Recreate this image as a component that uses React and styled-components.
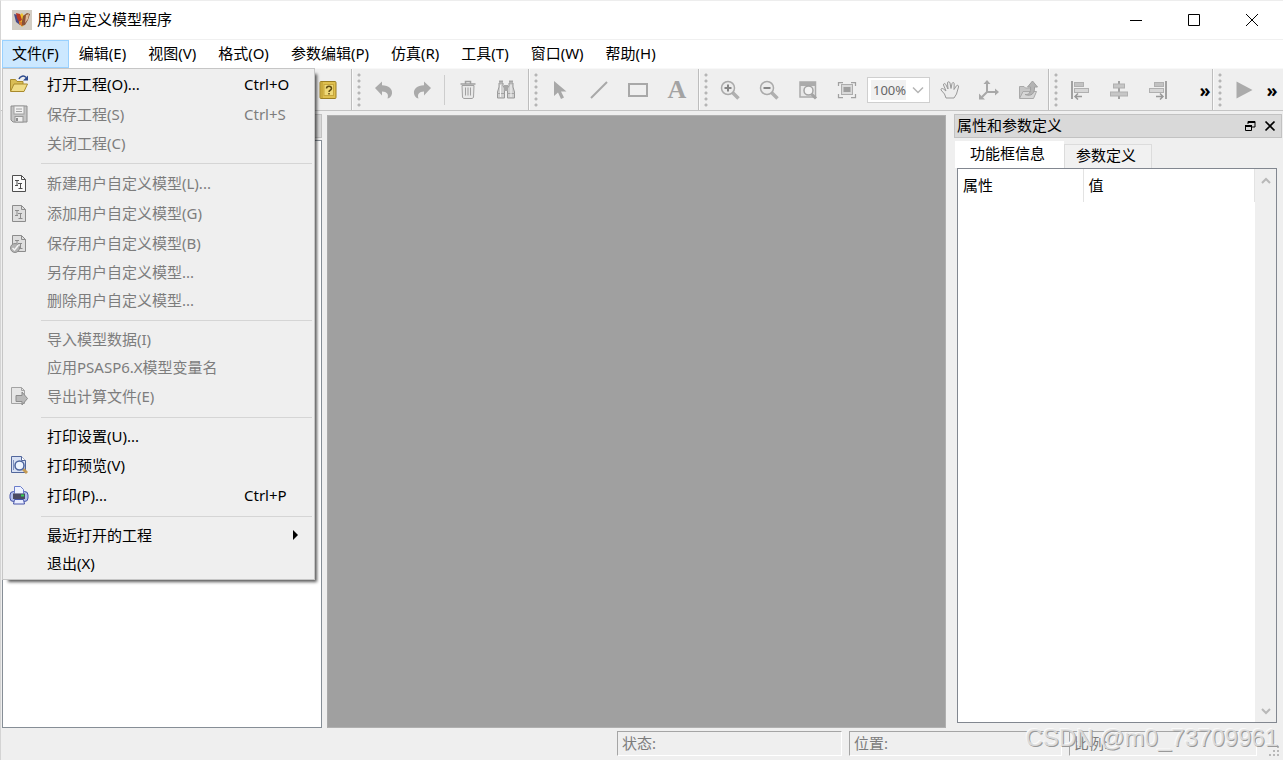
import React from "react";
import styled, { createGlobalStyle } from "styled-components";

const GlobalStyle = createGlobalStyle`
  * {
    box-sizing: border-box;
  }
  body {
    margin: 0;
    background: #efefef;
    font-family: "Noto Sans", "Noto Sans CJK SC", sans-serif;
    font-size: 15px;
    line-height: 20px;
    color: #000;
  }
  button, input, select {
    font: inherit;
    color: inherit;
  }
  button {
    padding: 0;
    border: 0;
    background: transparent;
  }
`;

/* ---------- icons ---------- */

const Svg = ({ size = 20, children }) => (
  <svg width={size} height={size} viewBox="0 0 20 20" fill="none" aria-hidden="true">
    {children}
  </svg>
);

const AppIcon = () => (
  <Svg>
    <rect width="20" height="20" fill="#d2cdc4" />
    <path d="M2 4l4 1 4 8-2 2-4-3z" fill="#4a4a86" />
    <path d="M8 5l2-2 2 3 1 8-3 3-3-4z" fill="#edc02a" />
    <path d="M4 3l4 1 2 6-3 2-2-4z" fill="#b83a28" />
    <path d="M11 6l4-3 3 1-2 6-3 5-4 1z" fill="#8a5236" />
    <path d="M14 5l3-1-1 5-3 4z" fill="#ddb898" />
    <path d="M7 11l3 1v4l-3-2z" fill="#d8742a" />
  </Svg>
);

const OpenIcon = () => (
  <Svg>
    <path d="M1.500 17V5.500h5l1.500 2h6V10" fill="#d9bd55" stroke="#a98a2c" />
    <path d="M1.500 17.500L5 10h13.500l-3.500 7.500z" fill="#f0dc86" stroke="#a98a2c" />
    <path d="M10 5c1-3 5-4 7-1.500" stroke="#2d4a8e" strokeWidth="1.500" />
    <path d="M19 1.500v5h-5z" fill="#2d4a8e" />
  </Svg>
);

const SaveIcon = () => (
  <Svg>
    <path d="M2 2h16v16H4l-2-2z" fill="#c5c5c5" stroke="#8e8e8e" />
    <rect x="5" y="2" width="10" height="8" fill="#f1f1f1" stroke="#a0a0a0" />
    <path d="M7 5h6M7 7.500h6" stroke="#a0a0a0" />
    <rect x="6" y="12.500" width="8" height="5.500" fill="#eee" stroke="#999" />
    <path d="M8 14v3" stroke="#8e8e8e" strokeWidth="2" />
  </Svg>
);

const ModelIcon = ({ color = "#4e4e4e", fill = "#fafafa", check }) => (
  <Svg>
    <path d="M3.500 2.500h9l4 4v12h-13z" fill={fill} stroke={color} />
    <path d="M12.500 2.500v4h4" stroke={color} />
    <path d="M6 7.500h4M8 7.500v5M6 12.500h3M9 10.500h4M11.500 10.500v5M9.500 15.500h4" stroke={color} />
    {check && (
      <>
        <circle cx="6" cy="15" r="4.500" fill="#b3b3b3" stroke="#8e8e8e" />
        <path d="M3.500 15l2 2 4-5" stroke="#f4f4f4" strokeWidth="1.500" />
      </>
    )}
  </Svg>
);

const ExportIcon = () => (
  <Svg>
    <path d="M2.500 1.500h10l3 3v13h-13z" fill="#e6e6e6" stroke="#a3a3a3" />
    <path d="M12.500 1.500v3h3" stroke="#a3a3a3" />
    <path d="M7 9.500h6V6l5.500 6.500-5.500 6.500v-3.500H7z" fill="#b9b9b9" stroke="#8c8c8c" />
  </Svg>
);

const PreviewIcon = () => (
  <Svg>
    <path d="M2.500 1.500h10l4 4v12h-14z" fill="#d7e0f3" stroke="#52679c" />
    <path d="M12.500 1.500v4h4" fill="#fff" stroke="#52679c" />
    <path d="M4.500 5v10" stroke="#7f92c0" />
    <path d="M14 14l4 4" stroke="#c49a53" strokeWidth="3" />
    <circle cx="10.500" cy="10.500" r="4.500" fill="#edf4ff" stroke="#4a629c" strokeWidth="1.500" />
  </Svg>
);

const PrintIcon = () => (
  <Svg>
    <rect x="1" y="6.500" width="18" height="10" rx="3.500" fill="#b3bfec" stroke="#4553a8" />
    <path d="M5.500 8.500v-7h6l3 3v4" fill="#eef2ff" stroke="#6a7ccb" />
    <rect x="4" y="8.500" width="12" height="5.500" fill="#4a4a63" />
    <path d="M12 10.500h3" stroke="#35d253" strokeWidth="2" />
    <path d="M5.500 14.500h9l1 4.500h-11z" fill="#e9edff" stroke="#4553a8" />
  </Svg>
);

const HelpIcon = () => (
  <Svg>
    <rect x="1" y="1.500" width="16" height="17" rx="1" fill="#dfc04f" stroke="#9c7f23" />
    <path d="M3 2v16" stroke="#b5952f" />
    <rect x="5" y="4.500" width="9.500" height="11" fill="#efd978" stroke="#c7a63c" />
    <path d="M7.500 8.500c0-3 5-3 5 0 0 2-2.500 1.500-2.500 3.500" stroke="#5f4a12" strokeWidth="1.500" />
    <path d="M9.250 13h1.500v1.500h-1.500z" fill="#5f4a12" />
  </Svg>
);

const UndoIcon = () => (
  <Svg>
    <path d="M1 8l7-6.500v3.800c7 0 10.500 3.700 10 8.200-.3 2.700-2 4.500-4.500 5 1.500-4-.5-7-5.500-7v4z" fill="#aaa" />
  </Svg>
);

const RedoIcon = () => (
  <Svg>
    <path d="M19 8l-7-6.500v3.800c-7 0-10.500 3.700-10 8.200.3 2.700 2 4.500 4.500 5-1.500-4 .5-7 5.500-7v4z" fill="#aaa" />
  </Svg>
);

const TrashIcon = () => (
  <Svg>
    <path d="M4 5.500h12l-.5 12-1.500 1H6l-1.500-1z" fill="#e8e8e8" stroke="#a0a0a0" />
    <path d="M2.500 4h15M7.500 3.500v-2h5v2" stroke="#a0a0a0" strokeWidth="1.500" />
    <path d="M7.500 7.500v8M10 7.500v8M12.500 7.500v8" stroke="#a0a0a0" />
  </Svg>
);

const FindIcon = () => (
  <Svg>
    <path d="M3 3h4v3l1.500 2v10h-7v-6L3 7zM17 3h-4v3l-1.500 2v10h7v-6L17 7z" fill="#d0d0d0" stroke="#999" />
    <path d="M3 1.500h4M13 1.500h4" stroke="#a5a5a5" strokeWidth="2" />
    <rect x="8" y="5" width="4" height="6" fill="#a8a8a8" />
    <path d="M1.500 13.500h7M11.500 13.500h7" stroke="#a5a5a5" />
    <path d="M4.500 5v12M15 5v12" stroke="#f4f4f4" />
  </Svg>
);

const PointerIcon = () => (
  <Svg>
    <path d="M4 1v15l4-3.500 3 6.500 3-1.500-3-6h5.500z" fill="#a8a8a8" />
  </Svg>
);

const LineIcon = () => (
  <Svg>
    <path d="M2 18L18 2" stroke="#a8a8a8" strokeWidth="2" />
  </Svg>
);

const RectIcon = () => (
  <Svg>
    <rect x="1" y="4" width="18" height="12" fill="#efefef" stroke="#a8a8a8" strokeWidth="2" />
  </Svg>
);

const ZoomIcon = ({ plus }) => (
  <Svg>
    <path d="M12.500 12.500l6 6" stroke="#b0b0b0" strokeWidth="3.500" />
    <circle cx="8" cy="8" r="6.500" fill="#ececec" stroke="#aaa" strokeWidth="1.500" />
    <path d="M4.500 8h7" stroke="#858585" strokeWidth="2" />
    {plus && <path d="M8 4.500v7" stroke="#858585" strokeWidth="2" />}
  </Svg>
);

const ZoomPageIcon = () => (
  <Svg>
    <rect x="2" y="2" width="15.500" height="15" fill="#e7e7e7" stroke="#ababab" strokeWidth="1.500" />
    <path d="M2 4h16" stroke="#ababab" strokeWidth="4" />
    <path d="M13.500 14l4.500 4.500" stroke="#a3a3a3" strokeWidth="3" />
    <circle cx="10.500" cy="10.500" r="4.500" fill="#f3f3f3" stroke="#a3a3a3" strokeWidth="1.500" />
  </Svg>
);

const FitIcon = () => (
  <Svg>
    <path d="M1.500 6V2.500H6M14 2.500h4.500V6M18.500 14v3.500H14M6 17.500H1.500V14" stroke="#a0a0a0" strokeWidth="1.250" />
    <rect x="4.500" y="4.500" width="11" height="10" fill="#d9d9d9" stroke="#adadad" />
    <rect x="6.500" y="7" width="7" height="5" fill="#9e9e9e" />
  </Svg>
);

const HandIcon = () => (
  <Svg>
    <path
      d="M6 18l-1.500-4L1 10c-.5-1.500 1.500-2 2.500-1L6 11 3.500 5c-.3-1.500 1.500-2 2.200-.7L8 9 7.500 3c0-1.700 2.200-1.700 2.500 0l1 5.500 1-5c.5-1.500 2.300-1.200 2.200.3L14 9.500l2.500-3.800c1-1 2.500-.2 2 1.300L16.500 14 14 18z"
      fill="#ededed"
      stroke="#999"
    />
  </Svg>
);

const AxesIcon = () => (
  <Svg>
    <path d="M8 3v9h9M8 12l-5 5" stroke="#a8a8a8" strokeWidth="2" />
    <path d="M8 0l3.500 4h-7zM20 12l-4 3.500v-7zM0 19.500v-6l6 6z" fill="#a8a8a8" />
  </Svg>
);

const FolderUpIcon = () => (
  <Svg>
    <path d="M1.500 18V6.500H6L7.500 8H14v4" fill="#c6c6c6" stroke="#a9a9a9" />
    <path d="M1.500 18.500L5 11.500h13.500l-3 7z" fill="#d6d6d6" stroke="#a9a9a9" />
    <path d="M7 14.500c4 .5 6-2 5.500-7.500H9.500l5-6 5 6h-3c.5 6-3 10-9.500 7.500z" fill="#b4b4b4" stroke="#a0a0a0" />
  </Svg>
);

const AlignLeftIcon = () => (
  <Svg>
    <path d="M2 1v18" stroke="#a1a1a1" strokeWidth="2" />
    <rect x="4.500" y="2.500" width="9" height="4" fill="#c2c2c2" stroke="#b0b0b0" />
    <rect x="4.500" y="8.500" width="14" height="4" fill="#d6d6d6" stroke="#b0b0b0" />
    <path d="M5 16.500h7M8 13.500l-3 3 3 3" stroke="#999" strokeWidth="1.500" />
  </Svg>
);

const AlignCenterIcon = () => (
  <Svg>
    <path d="M10 1v18" stroke="#a1a1a1" strokeWidth="2" />
    <rect x="4.500" y="4" width="11" height="4" fill="#c6c6c6" stroke="#b0b0b0" />
    <rect x="1.500" y="12" width="17" height="4" fill="#c6c6c6" stroke="#b0b0b0" />
  </Svg>
);

const AlignRightIcon = () => (
  <Svg>
    <path d="M18 1v18" stroke="#a1a1a1" strokeWidth="2" />
    <rect x="6.500" y="2.500" width="9" height="4" fill="#c2c2c2" stroke="#b0b0b0" />
    <rect x="1.500" y="8.500" width="14" height="4" fill="#d6d6d6" stroke="#b0b0b0" />
    <path d="M15 16.500H8M12 13.500l3 3-3 3" stroke="#999" strokeWidth="1.500" />
  </Svg>
);

const PlayIcon = () => (
  <Svg>
    <path d="M2.500 1.500L18.500 10l-16 8.500z" fill="#ababab" />
  </Svg>
);

/* ---------- title bar ---------- */

const Window = styled.div`
  display: flex;
  flex-direction: column;
  min-height: 100vh;
  border-top: 1px solid #ededed;
  border-left: 1px solid #d4d4d4;
  overflow: hidden;
`;

const TitleBar = styled.header`
  display: flex;
  align-items: center;
  height: 38px;
  padding: 0 2px 0 11px;
  background: #fff;
  h1 {
    flex: 1;
    margin: 0;
    padding: 0 0 2px 5px;
    font-size: 15px;
    font-weight: 400;
  }
`;

const WindowButton = styled.button`
  width: 58px;
  height: 38px;
  svg {
    display: block;
    margin: auto;
  }
`;

/* ---------- menu ---------- */

const MenuBar = styled.nav`
  display: flex;
  height: 29px;
  padding-left: 1px;
  border-top: 1px solid #f0f0f0;
  background: #fff;
`;

const MenuHolder = styled.div`
  position: relative;
`;

const MenuButton = styled.button`
  height: 28px;
  padding: 0 ${(p) => (p.$open ? 9 : 11)}px 2px 9px;
  border: 1px solid ${(p) => (p.$open ? "#99d1ff" : "transparent")};
  background: ${(p) => (p.$open ? "#cce8ff" : "transparent")};
  white-space: nowrap;
`;

const MenuPopup = styled.div`
  position: absolute;
  z-index: 2;
  top: 100%;
  left: 0;
  width: 313px;
  padding: 1px 2px 1px 1px;
  border: 1px solid #c6c6c6;
  background: #efefef;
  box-shadow: 4px 4px 3px -2px rgba(0, 0, 0, 0.65);
`;

const MenuItem = styled.button`
  display: grid;
  grid-template-columns: 38px 1fr 68px;
  align-items: center;
  width: 100%;
  height: ${(p) => (p.$icon ? 30 : 28)}px;
  padding: 0 0 2px 5px;
  text-align: left;
  color: #000;
  white-space: nowrap;
  &:disabled {
    color: #7d7d7d;
  }
  svg {
    display: block;
  }
`;

const MenuLine = styled.hr`
  height: 1px;
  margin: 5px 0 5px 37px;
  border: 0;
  background: #d5d5d5;
`;

const SubArrow = styled.span`
  justify-self: end;
  margin-right: 14px;
  border: 5px solid transparent;
  border-right: 0;
  border-left-color: #000;
`;

/* ---------- toolbars ---------- */

const ToolRow = styled.div`
  display: flex;
  height: 43px;
  border-top: 1px solid #f8f8f8;
  border-bottom: 1px solid #c4c4c4;
`;

const Toolbar = styled.div`
  display: flex;
  align-items: center;
  flex: ${(p) => (p.$grow ? "1 1 0" : "none")};
  justify-content: ${(p) => (p.$grow ? "flex-end" : "flex-start")};
  gap: ${(p) => p.$gap || 0}px;
  padding-right: ${(p) => p.$end || 0}px;
  border-right: 1px solid #bdbdbd;
  border-left: 1px solid #fafafa;
  &:last-child {
    border-right-color: transparent;
  }
`;

const Grip = styled.span`
  width: 4px;
  height: 34px;
  margin: 0 ${(p) => p.$space || 2}px 0 4px;
  background: radial-gradient(circle at 2px 2px, #b5b5b5 1px, transparent 2px);
  background-size: 4px 6px;
`;

const ToolButton = styled.button`
  display: flex;
  align-items: center;
  justify-content: center;
  width: 38px;
  height: 36px;
`;

const TextTool = styled.span`
  font: bold 26px "Liberation Serif", serif;
  color: #a3a3a3;
`;

const ToolLine = styled.span`
  width: 1px;
  height: 30px;
  margin: 0 4px 0 3px;
  background: #cdcdcd;
`;

const More = styled.button`
  width: 14px;
  margin-left: ${(p) => p.$space}px;
  font: bold 18px "Open Sans", sans-serif;
`;

const ZoomBox = styled.div`
  display: flex;
  align-items: center;
  position: relative;
  height: 26px;
  border: 1px solid #cfcfcf;
  background: #fff;
  select {
    width: 61px;
    height: 20px;
    margin: 0;
    padding: 0 0 0 5px;
    border: 0;
    appearance: none;
    background: linear-gradient(90deg, #fff 3px, #f1f1f1 3px, #f1f1f1 38px, #fff 38px);
    font: 13px "Noto Sans", sans-serif;
    color: #666;
  }
  svg {
    position: absolute;
    right: 5px;
    pointer-events: none;
  }
`;

/* ---------- work area ---------- */

const Work = styled.main`
  display: flex;
  flex: 1;
  min-height: 300px;
  padding: 3px 1px 0 1px;
`;

const Dock = styled.section`
  display: flex;
  flex-direction: column;
  flex: 0 0 ${(p) => p.$width}px;
`;

const DockTitle = styled.div`
  display: flex;
  align-items: center;
  height: 24px;
  padding: 0 1px 0 2px;
  border: 1px solid #c2c2c2;
  background: #d9d9d9;
  h2 {
    flex: 1;
    margin: 0;
    padding-bottom: 2px;
    font-size: 15px;
    font-weight: 400;
  }
  button {
    display: flex;
    align-items: center;
    justify-content: center;
    width: 20px;
    height: 20px;
  }
`;

const Tree = styled.div`
  flex: 1;
  margin-top: 2px;
  border: 1px solid #868e96;
  background: #fff;
`;

const Canvas = styled.div`
  flex: 1;
  margin: 1px 8px 0 5px;
  border: 1px solid #b0b0b0;
  border-left-color: #a9a9a9;
  background: #a0a0a0;
`;

const Tabs = styled.div`
  display: flex;
  align-items: flex-end;
  height: 28px;
  margin: 2px 0 0 1px;
`;

const Tab = styled.button`
  width: ${(p) => (p.$active ? 109 : 88)}px;
  height: ${(p) => (p.$active ? 27 : 24)}px;
  padding: 0 4px ${(p) => (p.$active ? 5 : 4)}px 0;
  border: 1px solid ${(p) => (p.$active ? "#fff" : "#dcdcdc")};
  border-bottom: 0;
  background: ${(p) => (p.$active ? "#fff" : "#f1f1f1")};
`;

const PropArea = styled.div`
  display: flex;
  flex: 1;
  margin: 0 5px 5px 3px;
  border: 1px solid #828790;
  background: #fff;
`;

const PropTable = styled.table`
  flex: 1;
  align-self: flex-start;
  border-collapse: collapse;
  table-layout: fixed;
  th {
    height: 33px;
    padding: 0 5px 2px;
    border-right: 1px solid #e3e3e3;
    font-weight: 400;
    text-align: left;
  }
  th:first-child {
    width: 125px;
  }
`;

const ScrollTrack = styled.div`
  display: flex;
  flex-direction: column;
  justify-content: space-between;
  align-items: center;
  width: 21px;
  padding: 7px 0 6px;
  background: #efefef;
`;

/* ---------- status bar ---------- */

const StatusBar = styled.footer`
  display: flex;
  position: relative;
  justify-content: flex-end;
  gap: 7px;
  height: 32px;
  padding: 3px 26px 4px 0;
  color: #7c7c7c;
`;

const StatusField = styled.div`
  width: ${(p) => p.$width}px;
  padding: 1px 4px;
  border: 1px solid #fff;
  border-top-color: #a5a5a5;
  border-left-color: #a5a5a5;
`;

const SizeGrip = styled.svg`
  position: absolute;
  right: 3px;
  bottom: 3px;
`;

const Watermark = styled.div`
  position: absolute;
  right: 5px;
  bottom: 7px;
  font: 24px/30px "Liberation Sans", sans-serif;
  color: rgba(226, 226, 226, 0.9);
  text-shadow: 1px 1px 0 #999, -1px -1px 0 #fafafa;
  pointer-events: none;
`;

const fileMenu = [
  { label: "打开工程(O)...", keys: "Ctrl+O", icon: <OpenIcon /> },
  { label: "保存工程(S)", keys: "Ctrl+S", icon: <SaveIcon />, off: true },
  { label: "关闭工程(C)", off: true },
  null,
  { label: "新建用户自定义模型(L)...", icon: <ModelIcon />, off: true },
  { label: "添加用户自定义模型(G)", icon: <ModelIcon color="#8c8c8c" fill="#dedede" />, off: true },
  { label: "保存用户自定义模型(B)", icon: <ModelIcon color="#8c8c8c" fill="#dedede" check />, off: true },
  { label: "另存用户自定义模型...", off: true },
  { label: "删除用户自定义模型...", off: true },
  null,
  { label: "导入模型数据(I)", off: true },
  { label: "应用PSASP6.X模型变量名", off: true },
  { label: "导出计算文件(E)", icon: <ExportIcon />, off: true },
  null,
  { label: "打印设置(U)..." },
  { label: "打印预览(V)", icon: <PreviewIcon /> },
  { label: "打印(P)...", keys: "Ctrl+P", icon: <PrintIcon /> },
  null,
  { label: "最近打开的工程", sub: true },
  { label: "退出(X)" },
];

const otherMenus = [
  "编辑(E)",
  "视图(V)",
  "格式(O)",
  "参数编辑(P)",
  "仿真(R)",
  "工具(T)",
  "窗口(W)",
  "帮助(H)",
];

const Tool = ({ label, children }) => (
  <ToolButton type="button" aria-label={label}>
    {children}
  </ToolButton>
);

function FileMenu() {
  return (
    <MenuPopup role="menu">
      {fileMenu.map((item, i) =>
        item ? (
          <MenuItem key={item.label} role="menuitem" $icon={item.icon} disabled={item.off}>
            <span>{item.icon}</span>
            <span>{item.label}</span>
            {item.sub ? <SubArrow /> : <span>{item.keys}</span>}
          </MenuItem>
        ) : (
          <MenuLine key={i} />
        )
      )}
    </MenuPopup>
  );
}

function Toolbars() {
  return (
    <ToolRow>
      <Toolbar $grow $end={3}>
        <Tool label="帮助"><HelpIcon /></Tool>
      </Toolbar>
      <Toolbar $end={3}>
        <Grip $space={4} />
        <Tool label="撤销"><UndoIcon /></Tool>
        <Tool label="重做"><RedoIcon /></Tool>
        <ToolLine />
        <Tool label="删除"><TrashIcon /></Tool>
        <Tool label="查找"><FindIcon /></Tool>
      </Toolbar>
      <Toolbar $gap={1} $end={2}>
        <Grip />
        <Tool label="选择"><PointerIcon /></Tool>
        <Tool label="直线"><LineIcon /></Tool>
        <Tool label="矩形"><RectIcon /></Tool>
        <Tool label="文字"><TextTool>A</TextTool></Tool>
      </Toolbar>
      <Toolbar $gap={1} $end={1}>
        <Grip />
        <Tool label="放大"><ZoomIcon plus /></Tool>
        <Tool label="缩小"><ZoomIcon /></Tool>
        <Tool label="缩放页面"><ZoomPageIcon /></Tool>
        <Tool label="适合窗口"><FitIcon /></Tool>
        <ZoomBox>
          <select aria-label="缩放比例" defaultValue="100%">
            <option>100%</option>
          </select>
          <svg width="12" height="8" viewBox="0 0 12 8" fill="none">
            <path d="M1 1.500l5 5 5-5" stroke="#b5b5b5" strokeWidth="1.500" />
          </svg>
        </ZoomBox>
        <Tool label="平移"><HandIcon /></Tool>
        <Tool label="坐标"><AxesIcon /></Tool>
        <Tool label="上级"><FolderUpIcon /></Tool>
      </Toolbar>
      <Toolbar $gap={1}>
        <Grip />
        <Tool label="左对齐"><AlignLeftIcon /></Tool>
        <Tool label="居中对齐"><AlignCenterIcon /></Tool>
        <Tool label="右对齐"><AlignRightIcon /></Tool>
        <More type="button" $space={20}>»</More>
      </Toolbar>
      <Toolbar $gap={1} $end={3}>
        <Grip />
        <Tool label="运行"><PlayIcon /></Tool>
        <More type="button" $space={1}>»</More>
      </Toolbar>
    </ToolRow>
  );
}

function PropertyDock() {
  return (
    <Dock $width={328}>
      <DockTitle>
        <h2>属性和参数定义</h2>
        <button type="button" aria-label="浮动">
          <svg width="12" height="12" viewBox="0 0 12 12" fill="none" stroke="#000">
            <path d="M4 4V1.500h7V7H8" />
            <path d="M4 2h7M1 6h7" strokeWidth="2" />
            <path d="M1.500 5.500h6v5h-6z" />
          </svg>
        </button>
        <button type="button" aria-label="关闭">
          <svg width="12" height="12" viewBox="0 0 12 12">
            <path d="M1.500 1.500l9 9M10.500 1.500l-9 9" stroke="#000" strokeWidth="1.750" />
          </svg>
        </button>
      </DockTitle>
      <Tabs role="tablist">
        <Tab role="tab" aria-selected="true" $active>功能框信息</Tab>
        <Tab role="tab" aria-selected="false">参数定义</Tab>
      </Tabs>
      <PropArea>
        <PropTable>
          <thead>
            <tr>
              <th>属性</th>
              <th>值</th>
            </tr>
          </thead>
        </PropTable>
        <ScrollTrack>
          <svg width="14" height="9" viewBox="0 0 14 9" fill="none">
            <path d="M3 7l4-4 4 4" stroke="#b8b8b8" strokeWidth="2" />
          </svg>
          <svg width="14" height="9" viewBox="0 0 14 9" fill="none">
            <path d="M3 2l4 4 4-4" stroke="#b8b8b8" strokeWidth="2" />
          </svg>
        </ScrollTrack>
      </PropArea>
    </Dock>
  );
}

function App() {
  return (
    <Window>
      <GlobalStyle />
      <TitleBar>
        <AppIcon />
        <h1>用户自定义模型程序</h1>
        <WindowButton type="button" aria-label="最小化">
          <svg width="12" height="12"><path d="M0 6.500h12" stroke="#000" /></svg>
        </WindowButton>
        <WindowButton type="button" aria-label="最大化">
          <svg width="12" height="12"><path d="M.5.5h11v11H.5z" fill="none" stroke="#000" /></svg>
        </WindowButton>
        <WindowButton type="button" aria-label="关闭">
          <svg width="12" height="12"><path d="M0 0l12 12M12 0L0 12" stroke="#000" /></svg>
        </WindowButton>
      </TitleBar>
      <MenuBar>
        <MenuHolder>
          <MenuButton type="button" aria-expanded="true" $open>文件(F)</MenuButton>
          <FileMenu />
        </MenuHolder>
        {otherMenus.map((m) => (
          <MenuButton key={m} type="button">{m}</MenuButton>
        ))}
      </MenuBar>
      <Toolbars />
      <Work>
        <Dock $width={320}>
          <DockTitle />
          <Tree />
        </Dock>
        <Canvas />
        <PropertyDock />
      </Work>
      <StatusBar>
        <StatusField $width={225}>状态:</StatusField>
        <StatusField $width={213}>位置:</StatusField>
        <StatusField $width={188}>比例:</StatusField>
        <SizeGrip width="12" height="12" fill="#b8b8b8">
          <path d="M9 1h2v2H9zM5 5h2v2H5zM9 5h2v2H9zM1 9h2v2H1zM5 9h2v2H5zM9 9h2v2H9z" />
        </SizeGrip>
        <Watermark>CSDN @m0_73709961</Watermark>
      </StatusBar>
    </Window>
  );
}

export default App;
